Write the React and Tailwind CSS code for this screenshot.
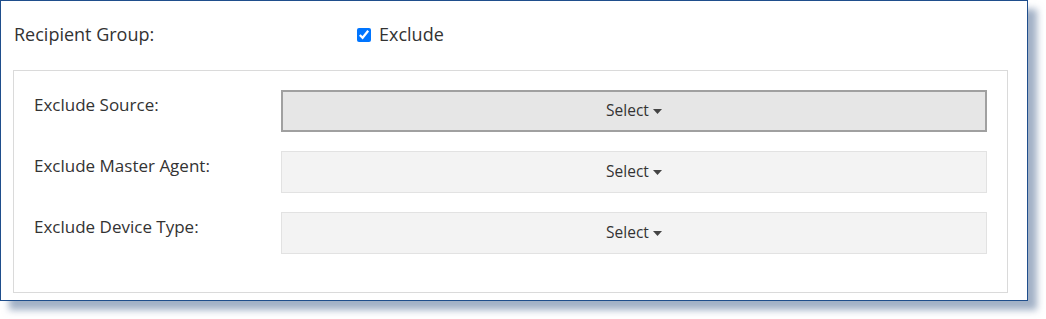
import { useState } from "react";

const rows = [
  { label: "Exclude Source:", active: true },
  { label: "Exclude Master Agent:", active: false },
  { label: "Exclude Device Type:", active: false },
];

const Caret = () => (
  <svg width="9" height="5" viewBox="0 0 9 5" className="ml-[4px]">
    <path d="M0 0h9L4.5 5z" fill="#444" />
  </svg>
);

const App = () => {
  const [exclude, setExclude] = useState(true);

  return (
    <div className="w-[1046px] h-[319px] bg-white" style={{ fontFamily: '"Open Sans", "Liberation Sans", sans-serif' }}>
      <div className="w-[1028px] h-[301px] border border-[#1f4e8c] bg-white shadow-[9px_9px_7px_rgba(100,125,160,0.6)]">
        {/* Header */}
        <div className="flex items-center h-[69px] pl-[13px] pb-[2px]">
          <span className="w-[343px] text-[18px] text-[#333]">Recipient Group:</span>
          <label className="flex items-center gap-[8px] text-[18px] text-[#333]">
            <input
              type="checkbox"
              checked={exclude}
              onChange={(e) => setExclude(e.target.checked)}
              className="w-[14px] h-[14px] m-0"
            />
            Exclude
          </label>
        </div>

        {/* Exclude panel */}
        <div className="ml-[12px] w-[995px] h-[223px] border border-[#dadada] pt-[19px] pl-[20px]">
          <div className="flex flex-col gap-[19px]">
            {rows.map((row) => (
              <div key={row.label} className="flex">
                <div className="w-[247px] pt-[3px] text-[17px] leading-[24px] text-[#333]">{row.label}</div>
                <button
                  type="button"
                  className={
                    row.active
                      ? "w-[706px] h-[42px] flex items-center justify-center bg-[#e6e6e6] border-2 border-[#a0a0a0] text-[15.5px] text-[#333]"
                      : "w-[706px] h-[42px] flex items-center justify-center bg-[#f3f3f3] border border-[#e2e2e2] text-[15.5px] text-[#333]"
                  }
                >
                  Select
                  <Caret />
                </button>
              </div>
            ))}
          </div>
        </div>
      </div>
    </div>
  );
};

export default App;
